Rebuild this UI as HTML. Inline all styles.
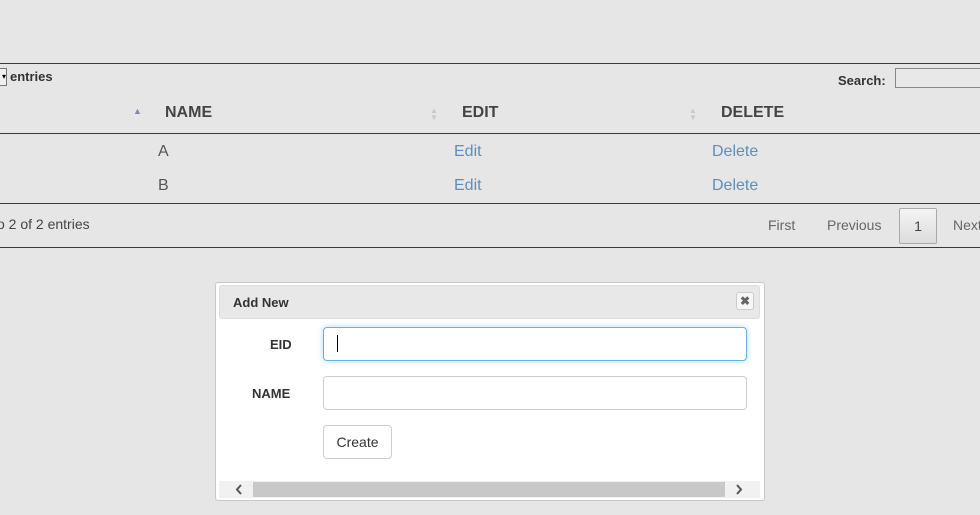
<!DOCTYPE html>
<html><head><style>
body{margin:0;width:980px;height:515px;background:#e6e6e6;font-family:"Liberation Sans",Arial,sans-serif;position:relative;overflow:hidden}
.a{position:absolute;white-space:nowrap}
.hl{position:absolute;left:0;width:980px;height:1px;background:#3a3a3a}
.th{font-size:16px;font-weight:bold;color:#444}
.td{font-size:16px;color:#555}
.lk{font-size:16px;color:#5b8fc0}
.ar{font-size:8px;color:#c8c8c8;line-height:7px}
</style></head><body>
<div class="hl" style="top:63px"></div>
<div class="hl" style="top:133px"></div>
<div class="hl" style="top:203px"></div>
<div class="hl" style="top:247px"></div>
<div class="a" style="left:-6px;top:68px;width:11px;height:16px;border:1px solid #777;background:#f0f0f0;font-size:8px;line-height:16px;text-align:right">▾</div>
<div class="a" style="left:10px;top:69px;font-size:13px;font-weight:bold;color:#333">entries</div>
<div class="a" style="left:838px;top:73px;font-size:13px;font-weight:bold;color:#333">Search:</div>
<div class="a" style="left:895px;top:68px;width:100px;height:18px;border:1px solid #888;border-right:none;background:#e8e8e8"></div>
<div class="a" style="left:133px;top:106px;font-size:9px;color:#8a7fc4">▲</div>
<div class="a th" style="left:165px;top:104px">NAME</div>
<div class="a ar" style="left:430px;top:107px">▲<br>▼</div>
<div class="a th" style="left:462px;top:104px">EDIT</div>
<div class="a ar" style="left:689px;top:107px">▲<br>▼</div>
<div class="a th" style="left:721px;top:104px">DELETE</div>
<div class="a td" style="left:158px;top:143px">A</div>
<div class="a lk" style="left:454px;top:143px">Edit</div>
<div class="a lk" style="left:712px;top:143px">Delete</div>
<div class="a td" style="left:158px;top:177px">B</div>
<div class="a lk" style="left:454px;top:177px">Edit</div>
<div class="a lk" style="left:712px;top:177px">Delete</div>
<div class="a" style="left:-3px;top:216px;font-size:14px;color:#444">o 2 of 2 entries</div>
<div class="a" style="left:768px;top:217px;font-size:14px;color:#666">First</div>
<div class="a" style="left:827px;top:217px;font-size:14px;color:#666">Previous</div>
<div class="a" style="left:899px;top:208px;width:36px;height:34px;border:1px solid #aaa;border-radius:2px;background:linear-gradient(#f4f4f4,#dcdcdc);font-size:14px;color:#444;text-align:center;line-height:34px">1</div>
<div class="a" style="left:953px;top:217px;font-size:14px;color:#666">Next</div>

<div class="a" style="left:215px;top:282px;width:548px;height:217px;border:1px solid #c8c8c8;border-radius:3px;background:#fff"></div>
<div class="a" style="left:219px;top:285px;width:541px;height:34px;background:#e8e8e8;border:1px solid #ddd;border-radius:3px;box-sizing:border-box"></div>
<div class="a" style="left:233px;top:295px;font-size:13px;font-weight:bold;color:#333">Add New</div>
<div class="a" style="left:736px;top:292px;width:18px;height:18px;border:1px solid #ccc;border-radius:3px;background:#f6f6f6;box-sizing:border-box;text-align:center;font-size:12px;line-height:16px;color:#666;font-weight:bold">✖</div>
<div class="a" style="left:270px;top:337px;font-size:13px;font-weight:bold;color:#333">EID</div>
<div class="a" style="left:252px;top:386px;font-size:13px;font-weight:bold;color:#333">NAME</div>
<div class="a" style="left:323px;top:327px;width:424px;height:34px;border:1px solid #66afe9;border-radius:4px;box-sizing:border-box;box-shadow:0 0 6px rgba(102,175,233,.5)"></div>
<div class="a" style="left:337px;top:335px;width:1px;height:17px;background:#000"></div>
<div class="a" style="left:323px;top:376px;width:424px;height:34px;border:1px solid #ccc;border-radius:4px;box-sizing:border-box"></div>
<div class="a" style="left:323px;top:425px;width:69px;height:34px;border:1px solid #ccc;border-radius:4px;box-sizing:border-box;font-size:14px;color:#333;text-align:center;line-height:32px">Create</div>
<div class="a" style="left:219px;top:481px;width:541px;height:17px;background:#f1f1f1"></div>
<div class="a" style="left:253px;top:482px;width:472px;height:15px;background:#c8c8c8"></div>
<svg class="a" style="left:233px;top:483px" width="12" height="13"><path d="M8 2L4 6.5L8 11" stroke="#555" stroke-width="2" fill="none"/></svg>
<svg class="a" style="left:733px;top:483px" width="12" height="13"><path d="M4 2L8 6.5L4 11" stroke="#555" stroke-width="2" fill="none"/></svg>
</body></html>
